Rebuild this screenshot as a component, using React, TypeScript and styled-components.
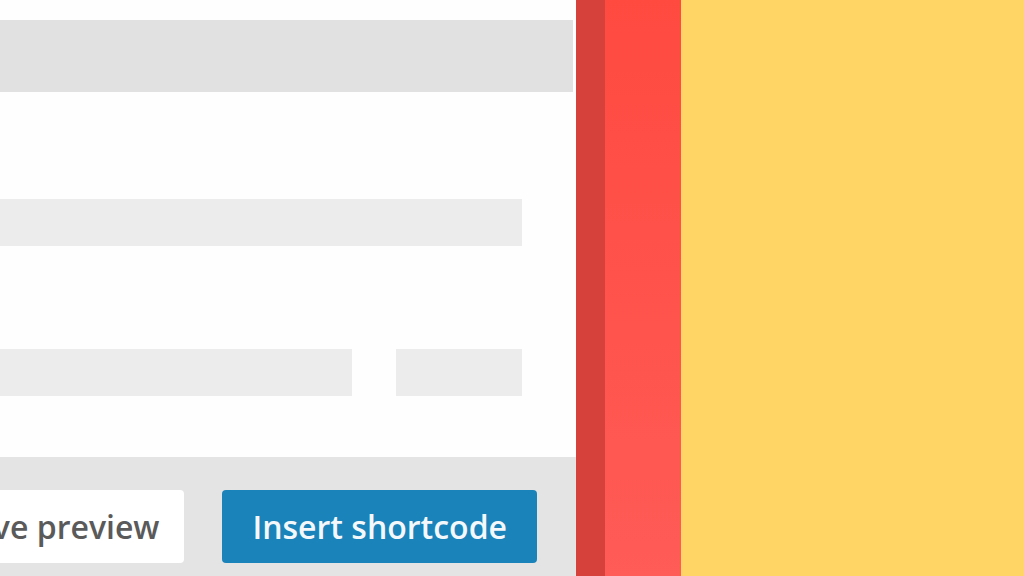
import React from "react";
import styled, { createGlobalStyle } from "styled-components";

const GlobalStyle = createGlobalStyle`
  html, body {
    margin: 0;
    padding: 0;
  }
  body {
    width: 1024px;
    height: 576px;
    overflow: hidden;
    font-family: "Open Sans", "Liberation Sans", sans-serif;
  }
`;

const App = () => {
  return (
    <>
      <GlobalStyle />
      <Root>
        <Panel>
          <TitleBar />
          <Body>
            <Field />
            <FieldRow>
              <Field $grow />
              <Field $width={126} />
            </FieldRow>
          </Body>
          <Footer>
            <Button>Live preview</Button>
            <Button $primary>Insert shortcode</Button>
          </Footer>
        </Panel>
        <Shade />
        <RedStripe />
        <YellowArea />
      </Root>
    </>
  );
};

const Root = styled.div`
  display: flex;
  width: 1024px;
  height: 576px;
`;

const Panel = styled.div`
  width: 576px;
  height: 576px;
  background: #fefefe;
  display: flex;
  flex-direction: column;
  overflow: hidden;
  padding-top: 20px;
  box-sizing: border-box;
`;

const TitleBar = styled.div`
  height: 72px;
  margin-right: 3px;
  background: #e1e1e1;
  flex-shrink: 0;
`;

const Body = styled.div`
  flex: 1;
  display: flex;
  flex-direction: column;
  gap: 103px;
  padding: 107px 54px 0 0;
`;

const FieldRow = styled.div`
  display: flex;
  gap: 44px;
`;

const Field = styled.div<{ $width?: number; $grow?: boolean }>`
  height: 47px;
  flex: none;
  background: #ececec;
  ${({ $width }) => ($width ? `width: ${$width}px;` : "")}
  ${({ $grow }) => ($grow ? "flex: 1 1 0;" : "")}
`;

const Footer = styled.div`
  height: 119px;
  background: #e4e4e4;
  display: flex;
  justify-content: flex-end;
  align-items: flex-start;
  gap: 38px;
  padding: 33px 39px 0 0;
  box-sizing: border-box;
  flex-shrink: 0;
`;

const Button = styled.div<{ $primary?: boolean }>`
  flex-shrink: 0;
  height: 73px;
  box-sizing: border-box;
  display: flex;
  align-items: center;
  padding: 0 ${({ $primary }) => ($primary ? "30px" : "25px")};
  border-radius: 4px;
  font-size: 32px;
  font-weight: 600;
  white-space: nowrap;
  background: ${({ $primary }) => ($primary ? "#1a83b9" : "#ffffff")};
  color: ${({ $primary }) => ($primary ? "#f4f8fb" : "#5a5a5a")};
`;

const Shade = styled.div`
  width: 29px;
  background: #d6423b;
`;

const RedStripe = styled.div`
  width: 76px;
  background: linear-gradient(#ff4a40, #ff5b57);
`;

const YellowArea = styled.div`
  flex: 1;
  background: #ffd666;
`;

export default App;
